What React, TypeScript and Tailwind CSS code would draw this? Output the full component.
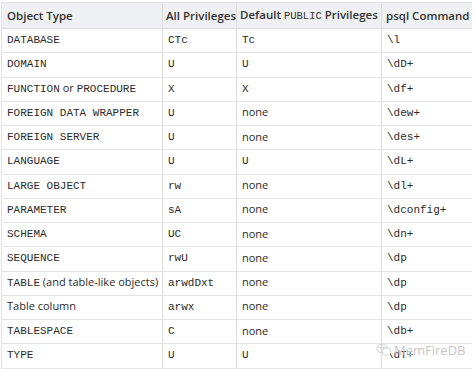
import React from 'react';

type Cell = { text: string; mono?: boolean }[];

const m = (text: string) => ({ text, mono: true });
const s = (text: string) => ({ text });

const rows: Cell[][] = [
  [[m('DATABASE')], [m('CTc')], [m('Tc')], [m('\\l')]],
  [[m('DOMAIN')], [m('U')], [m('U')], [m('\\dD+')]],
  [[m('FUNCTION'), s(' or '), m('PROCEDURE')], [m('X')], [m('X')], [m('\\df+')]],
  [[m('FOREIGN DATA WRAPPER')], [m('U')], [s('none')], [m('\\dew+')]],
  [[m('FOREIGN SERVER')], [m('U')], [s('none')], [m('\\des+')]],
  [[m('LANGUAGE')], [m('U')], [m('U')], [m('\\dL+')]],
  [[m('LARGE OBJECT')], [m('rw')], [s('none')], [m('\\dl+')]],
  [[m('PARAMETER')], [m('sA')], [s('none')], [m('\\dconfig+')]],
  [[m('SCHEMA')], [m('UC')], [s('none')], [m('\\dn+')]],
  [[m('SEQUENCE')], [m('rwU')], [s('none')], [m('\\dp')]],
  [[m('TABLE'), s(' (and table-like objects)')], [m('arwdDxt')], [s('none')], [m('\\dp')]],
  [[s('Table column')], [m('arwx')], [s('none')], [m('\\dp')]],
  [[m('TABLESPACE')], [m('C')], [s('none')], [m('\\db+')]],
  [[m('TYPE')], [m('U')], [m('U')], [m('\\dT+')]],
];

const widths = ['w-[161px]', 'w-[74px]', 'w-[145px]', 'w-[90px]'];

const CellView: React.FC<{ cell: Cell; idx: number }> = ({ cell, idx }) => (
  <div
    className={`${widths[idx]} shrink-0 flex items-center pl-[5px] whitespace-pre text-[#2b2b2b] text-[11px] leading-[14px] ${
      idx < 3 ? 'border-r border-[#dcdcdc]' : ''
    }`}
  >
    <span className="-mt-[2px]">
      {cell.map((p, i) =>
        p.mono ? (
          <span key={i} className="font-['Liberation_Mono',monospace]">
            {p.text}
          </span>
        ) : (
          <span key={i} className="font-['Open_Sans',sans-serif]">
            {p.text}
          </span>
        ),
      )}
    </span>
  </div>
);

export default function App() {
  return (
    <div className="relative w-[474px] h-[369px] bg-white overflow-hidden pt-[2px] pl-[1px]">
      <div className="w-[471px] border-l border-t border-[#e2e2e2]">
        <div className="flex h-[26px] bg-[#eef0f2] border-b border-[#dcdcdc] font-['Open_Sans',sans-serif] text-[11.5px] leading-[16px] font-semibold text-[#333] whitespace-nowrap">
          <div className="w-[161px] shrink-0 flex items-center pl-[5px] border-r border-[#dcdcdc]">Object Type</div>
          <div className="w-[74px] shrink-0 flex items-center pl-[3px] border-r border-[#dcdcdc]">All Privileges</div>
          <div className="w-[145px] shrink-0 flex items-center pl-[3px] border-r border-[#dcdcdc] whitespace-pre">
            <span>
              Default <span className="font-['Liberation_Mono',monospace] font-normal text-[10.5px]">PUBLIC</span> Privileges
            </span>
          </div>
          <div className="w-[90px] shrink-0 flex items-center pl-[4px]">psql Command</div>
        </div>
        {rows.map((r, i) => (
          <div key={i} className="flex h-[24.25px] border-b border-[#e4e4e4]">
            {r.map((c, j) => (
              <CellView key={j} cell={c} idx={j} />
            ))}
          </div>
        ))}
      </div>
      <div className="absolute left-[376px] top-[343px] flex items-center gap-[2px] text-[#c8c8c8]">
        <svg width="16" height="14" viewBox="0 0 16 14" fill="none" stroke="#cfcfcf" strokeWidth="1">
          <ellipse cx="6" cy="5.5" rx="5.2" ry="4.3" />
          <ellipse cx="10.5" cy="8.5" rx="4.3" ry="3.6" fill="white" />
          <circle cx="4.3" cy="4.5" r="0.6" fill="#cfcfcf" />
          <circle cx="7.6" cy="4.5" r="0.6" fill="#cfcfcf" />
        </svg>
        <span className="font-['Open_Sans',sans-serif] text-[13px] leading-none">MemFireDB</span>
      </div>
    </div>
  );
}
